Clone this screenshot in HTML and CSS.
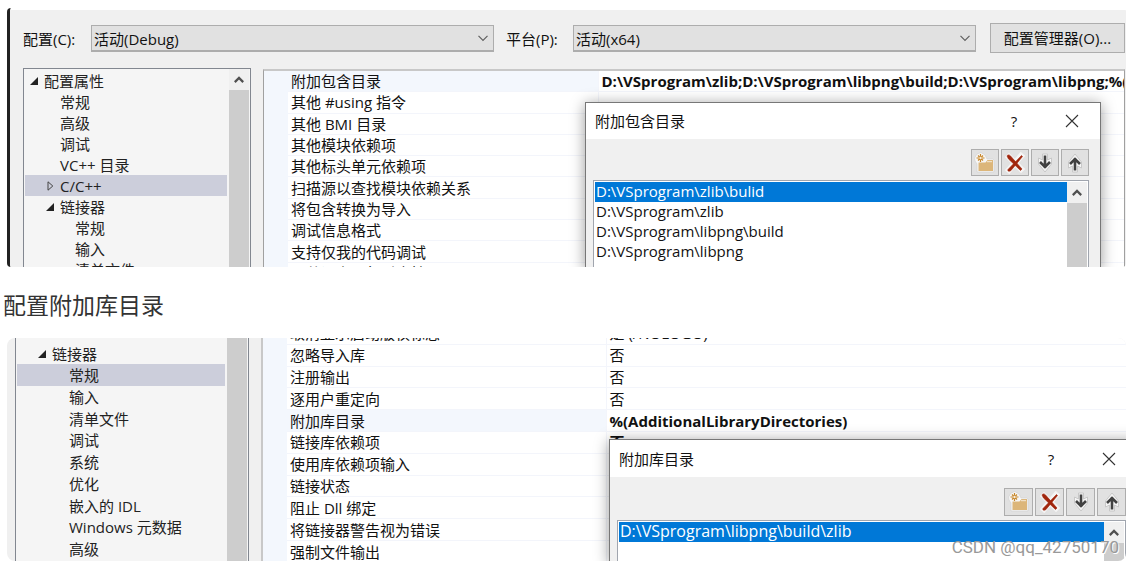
FILE: index.html
```html
<!DOCTYPE html>
<html lang="zh-CN">
<head>
  <meta charset="UTF-8">
  <meta name="viewport" content="width=device-width, initial-scale=1.0">
  <title>配置附加库目录</title>
  <link rel="stylesheet" href="styles.css">
</head>
<body>
  <!-- Shared icons -->
  <svg class="sprite" aria-hidden="true">
    <symbol id="chevron" viewBox="0 0 12 12"><path d="M1.5 3.8 6 8.3l4.5-4.5" fill="none" stroke="#606060" stroke-width="1.2"/></symbol>
    <symbol id="scroll-up" viewBox="0 0 12 12"><path d="M1.8 8.6 6 4.4l4.2 4.2" fill="none" stroke="#505050" stroke-width="2.2"/></symbol>
    <symbol id="close" viewBox="0 0 14 14"><path d="m1 1 12 12M13 1 1 13" fill="none" stroke="#333" stroke-width="1.1"/></symbol>
    <symbol id="open" viewBox="0 0 10 10"><path d="M8 1v8H0z" fill="#222"/></symbol>
    <symbol id="closed" viewBox="0 0 10 10"><path d="M2 .8v8.400L6.800 5z" fill="none" stroke="#444"/></symbol>
    <symbol id="folder" viewBox="0 0 22 22">
      <path d="M.5 6 3 2l4-1.500L11 3l2 4h6l1 1v12H3v-8L1 9z" fill="#f6f6f6" stroke="#d0d0d0" stroke-width=".6"/>
      <path d="M4.500 10.500h7l2-2.500h5.500v11H4.500z" fill="#dcb67a"/>
      <path d="M13 9.700h5" stroke="#f5ead7"/>
      <path d="M6.500 2v8M2.500 6h8M4 3.500l5 5M9 3.500l-5 5" stroke="#c8872b" stroke-width="1.200"/>
      <circle cx="6.500" cy="6" r="1.200" fill="#f8eedc"/>
    </symbol>
    <symbol id="delete" viewBox="0 0 22 22">
      <path d="m5 5 12 12M17 4 5 18" stroke="#f5f5f5" stroke-width="6" stroke-linecap="square"/>
      <path d="M3 4c1-2 3-1 4 .5L18 17l-1.500 1.500L4.500 7zM17.500 3.500l1 1L7 18.500c-1 1-4 1-3-1z" fill="#a1260d" stroke="#a1260d" stroke-width=".6"/>
    </symbol>
    <symbol id="down" viewBox="0 0 22 22">
      <path d="M8.500 2h5v6l4-2v6L11 20l-6.500-8V6l4 2z" fill="#f5f5f5" stroke="#c8c8c8"/>
      <path d="M11 3.500V16M6 10l5 5 5-5" fill="none" stroke="#424242" stroke-width="2.600"/>
    </symbol>
    <symbol id="up" viewBox="0 0 22 22">
      <path d="M8.500 20h5v-6l4 2v-6L11 2l-6.500 8v6l4-2z" fill="#f5f5f5" stroke="#c8c8c8"/>
      <path d="M11 18.500V6M6 12l5-5 5 5" fill="none" stroke="#424242" stroke-width="2.600"/>
    </symbol>
  </svg>

  <!-- Include directories -->
  <figure class="shot shot-include">
    <div class="window">
      <div class="toolbar">
        <label class="config-label" for="config">配置(C):</label>
        <span class="dropdown">
          <select id="config"><option>活动(Debug)</option></select>
          <svg><use href="#chevron"/></svg>
        </span>
        <label class="platform-label" for="platform">平台(P):</label>
        <span class="dropdown">
          <select id="platform"><option>活动(x64)</option></select>
          <svg><use href="#chevron"/></svg>
        </span>
        <button class="manager">配置管理器(O)...</button>
      </div>
      <div class="panes">
        <div class="tree-pane">
          <ul class="tree">
            <li><svg><use href="#open"/></svg>配置属性</li>
            <li class="level2">常规</li>
            <li class="level2">高级</li>
            <li class="level2">调试</li>
            <li class="level2">VC++ 目录</li>
            <li class="level2 selected"><svg><use href="#closed"/></svg>C/C++</li>
            <li class="level2"><svg><use href="#open"/></svg>链接器</li>
            <li class="level3">常规</li>
            <li class="level3">输入</li>
            <li class="level3">清单文件</li>
          </ul>
          <div class="scrollbar"><svg><use href="#scroll-up"/></svg></div>
        </div>
        <div class="props">
          <table>
            <colgroup><col class="gutter"><col class="name"><col></colgroup>
            <tr class="current"><td></td><th>附加包含目录</th><td>D:\VSprogram\zlib;D:\VSprogram\libpng\build;D:\VSprogram\libpng;%(AdditionalIncludeDirectories)</td></tr>
            <tr><td></td><th>其他 #using 指令</th><td></td></tr>
            <tr><td></td><th>其他 BMI 目录</th><td></td></tr>
            <tr><td></td><th>其他模块依赖项</th><td></td></tr>
            <tr><td></td><th>其他标头单元依赖项</th><td></td></tr>
            <tr><td></td><th>扫描源以查找模块依赖关系</th><td></td></tr>
            <tr><td></td><th>将包含转换为导入</th><td></td></tr>
            <tr><td></td><th>调试信息格式</th><td></td></tr>
            <tr><td></td><th>支持仅我的代码调试</th><td></td></tr>
            <tr><td></td><th>公共语言运行时支持</th><td></td></tr>
          </table>
        </div>
      </div>
    </div>

    <div class="dialog">
      <div class="titlebar">
        <span class="title">附加包含目录</span>
        <button aria-label="帮助">?</button>
        <button aria-label="关闭"><svg><use href="#close"/></svg></button>
      </div>
      <div class="actions">
        <button aria-label="新行"><svg><use href="#folder"/></svg></button>
        <button aria-label="删除"><svg><use href="#delete"/></svg></button>
        <button aria-label="下移"><svg><use href="#down"/></svg></button>
        <button aria-label="上移"><svg><use href="#up"/></svg></button>
      </div>
      <div class="listbox">
        <ul>
          <li class="active">D:\VSprogram\zlib\bulid</li>
          <li>D:\VSprogram\zlib</li>
          <li>D:\VSprogram\libpng\build</li>
          <li>D:\VSprogram\libpng</li>
        </ul>
        <div class="scrollbar"><svg><use href="#scroll-up"/></svg></div>
      </div>
    </div>
  </figure>

  <p class="caption">配置附加库目录</p>

  <!-- Library directories -->
  <figure class="shot shot-library">
    <div class="window">
      <div class="panes">
        <div class="tree-pane">
          <ul class="tree">
            <li class="level2">C/C++</li>
            <li class="level2"><svg><use href="#open"/></svg>链接器</li>
            <li class="level3 selected">常规</li>
            <li class="level3">输入</li>
            <li class="level3">清单文件</li>
            <li class="level3">调试</li>
            <li class="level3">系统</li>
            <li class="level3">优化</li>
            <li class="level3">嵌入的 IDL</li>
            <li class="level3">Windows 元数据</li>
            <li class="level3">高级</li>
          </ul>
          <div class="scrollbar"></div>
        </div>
        <div class="props">
          <table>
            <colgroup><col class="gutter"><col class="name"><col></colgroup>
            <tr><td></td><th>取消显示启动版权标志</th><td>是 (/NOLOGO)</td></tr>
            <tr><td></td><th>忽略导入库</th><td>否</td></tr>
            <tr><td></td><th>注册输出</th><td>否</td></tr>
            <tr><td></td><th>逐用户重定向</th><td>否</td></tr>
            <tr class="current"><td></td><th>附加库目录</th><td>%(AdditionalLibraryDirectories)</td></tr>
            <tr><td></td><th>链接库依赖项</th><td><b>否</b></td></tr>
            <tr><td></td><th>使用库依赖项输入</th><td></td></tr>
            <tr><td></td><th>链接状态</th><td></td></tr>
            <tr><td></td><th>阻止 Dll 绑定</th><td></td></tr>
            <tr><td></td><th>将链接器警告视为错误</th><td></td></tr>
            <tr><td></td><th>强制文件输出</th><td></td></tr>
          </table>
        </div>
      </div>
    </div>

    <div class="dialog">
      <div class="titlebar">
        <span class="title">附加库目录</span>
        <button aria-label="帮助">?</button>
        <button aria-label="关闭"><svg><use href="#close"/></svg></button>
      </div>
      <div class="actions">
        <button aria-label="新行"><svg><use href="#folder"/></svg></button>
        <button aria-label="删除"><svg><use href="#delete"/></svg></button>
        <button aria-label="下移"><svg><use href="#down"/></svg></button>
        <button aria-label="上移"><svg><use href="#up"/></svg></button>
      </div>
      <div class="listbox">
        <ul>
          <li class="active">D:\VSprogram\libpng\build\zlib</li>
        </ul>
        <div class="scrollbar"><svg><use href="#scroll-up"/></svg></div>
      </div>
    </div>
    <span class="watermark">CSDN @qq_42750170</span>
  </figure>
</body>
</html>
```
FILE: styles.css
```css
* {
  margin: 0;
  padding: 0;
  box-sizing: border-box;
}

body {
  font: 15px/20px "Open Sans", "Noto Sans CJK SC", sans-serif;
  color: #111;
  background: #fff;
  padding: 8px 8px 0 7px;
}

ul {
  list-style: none;
}

button,
select {
  font: inherit;
  color: inherit;
}

.sprite {
  display: none;
}

/* Cropped window captures */
.shot {
  position: relative;
  overflow: hidden;
  border-radius: 4px;
}

.shot-include {
  height: 259px;
  padding-top: 2px;
  border-left: 3px solid #222;
}

.shot-library {
  height: 223px;
  border-radius: 8px;
}

.window {
  height: 100%;
  display: flex;
  flex-direction: column;
  background: #f0f0f0;
}

.caption {
  font-size: 23px;
  line-height: 32px;
  color: #333;
  margin: 22px 0 17px -4px;
}

/* Top bar */
.toolbar {
  display: flex;
  align-items: center;
  padding: 13px 1px 15px 13px;
}

.config-label {
  width: 68px;
  padding-top: 2px;
}

.platform-label {
  width: 67px;
  margin-left: 12px;
  padding-top: 2px;
}

.dropdown {
  flex: 1;
  display: grid;
  align-items: center;
}

.dropdown select,
.dropdown svg {
  grid-area: 1 / 1;
}

.dropdown select {
  appearance: none;
  height: 27px;
  padding: 2px 0 0 2px;
  border: 1px solid #adadad;
  border-bottom-width: 2px;
  background: #e1e1e1;
}

.dropdown svg {
  width: 12px;
  height: 12px;
  justify-self: end;
  margin-right: 5px;
  pointer-events: none;
}

.manager {
  width: 135px;
  height: 30px;
  margin-left: 14px;
  border: 1px solid #adadad;
  background: #e1e1e1;
}

/* Tree and property grid */
.panes {
  flex: 1;
  display: flex;
  min-height: 0;
}

.shot-include .panes {
  padding: 0 1px 0 13px;
}

.shot-library .panes {
  padding-left: 8px;
}

.tree-pane {
  width: 228px;
  display: flex;
  border: 1px solid #828790;
  border-bottom: 0;
  background: #f5f5f5;
  padding: 0 1px;
}

.shot-library .tree-pane {
  width: 234px;
  border-top: 0;
}

.tree {
  flex: 1;
  display: grid;
  grid-auto-rows: 21px;
  margin-top: 1px;
  color: #222;
}

.shot-library .tree {
  grid-auto-rows: 1fr;
  height: 239px;
  margin-top: -17px;
}

.tree li {
  display: flex;
  align-items: center;
  padding-left: 5px;
  white-space: nowrap;
}

.tree li svg {
  width: 10px;
  height: 10px;
  margin-right: 4px;
}

.tree .level2 {
  padding-left: 35px;
}

.tree .level3 {
  padding-left: 50px;
}

.tree .level2:has(svg) {
  padding-left: 21px;
}

.shot-library .tree .level3 {
  padding-left: 52px;
}

.tree .selected {
  background: #cccedb;
}

.scrollbar {
  width: 20px;
  margin-left: 2px;
  background: #cdcdcd;
}

.scrollbar svg {
  display: block;
  width: 20px;
  height: 21px;
  padding: 4px;
  background: #f0f0f0;
}

.props {
  flex: 1;
  min-width: 0;
  margin: 1px 0 0 12px;
  overflow: hidden;
  border: 1px solid #a0a0a0;
  border-top: 2px solid #c8c8c8;
  border-bottom: 0;
  background: #fff;
}

.shot-library .props {
  margin: 0 0 0 12px;
  border: 0;
  border-left: 2px solid #c8c8c8;
}

.props table {
  width: 100%;
  height: 213px;
  table-layout: fixed;
  border-collapse: collapse;
}

.shot-library table {
  height: 240px;
  margin-top: -15px;
}

.gutter {
  width: 24px;
  background: #f3f7fd;
}

.name {
  width: 310px;
}

.shot-library .name {
  width: 319px;
}

.props th,
.props td {
  height: 20px;
  padding-left: 3px;
  font-weight: normal;
  text-align: left;
  white-space: nowrap;
}

.props th,
.props td:last-child {
  border-bottom: 1px solid #f3f5fb;
}

.props td:last-child {
  border-left: 1px solid #f3f5fb;
}

.props .current th {
  background: #f3f7fd;
}

.props .current td:last-child {
  font-weight: bold;
}

/* Directory dialogs lying over the property grid */
.dialog {
  position: absolute;
  top: 94px;
  right: 25px;
  bottom: -2px;
  left: 575px;
  display: flex;
  flex-direction: column;
  border: 1px solid #777;
  background: #f0f0f0;
  box-shadow: 0 2px 14px rgba(0, 0, 0, 0.4);
}

.shot-library .dialog {
  top: 101px;
  right: -12px;
  left: 602px;
}

.titlebar {
  display: flex;
  align-items: center;
  height: 36px;
  padding: 0 20px 0 9px;
  background: #fff;
}

.shot-library .titlebar {
  height: 37px;
}

.title {
  flex: 1;
}

.titlebar button {
  width: 16px;
  height: 20px;
  border: 0;
  background: none;
}

.titlebar button + button {
  margin-left: 42px;
}

.titlebar svg {
  display: block;
  width: 14px;
  height: 14px;
  margin-left: 1px;
}

.actions {
  display: flex;
  justify-content: flex-end;
  gap: 2px;
  padding: 10px 11px 4px;
}

.actions button {
  width: 28px;
  height: 27px;
  border: 1px solid #adadad;
  background: #e1e1e1;
}

.shot-library .actions {
  padding: 11px 11px 4px;
}

.shot-library .actions button {
  width: 29px;
  height: 28px;
}

.actions svg {
  display: block;
  width: 22px;
  height: 22px;
  margin: auto;
}

.listbox {
  flex: 1;
  display: flex;
  margin: 0 11px 0 7px;
  padding: 1px 1px 0;
  border: 1px solid #a0a5ae;
  border-bottom: 0;
  background: #fff;
}

.listbox ul {
  flex: 1;
}

.listbox li {
  height: 20px;
  line-height: 18px;
  padding-left: 1px;
}

.shot-library .listbox li {
  font-size: 16px;
}

.listbox .active {
  background: #0078d7;
  color: #fff;
}

.listbox .scrollbar {
  margin-left: 0;
}

.watermark {
  position: absolute;
  right: 7px;
  bottom: 4px;
  font: 17px/20px Roboto, "Liberation Sans", sans-serif;
  color: #999;
  text-shadow: 1px 1px 0 #fff;
}
```
